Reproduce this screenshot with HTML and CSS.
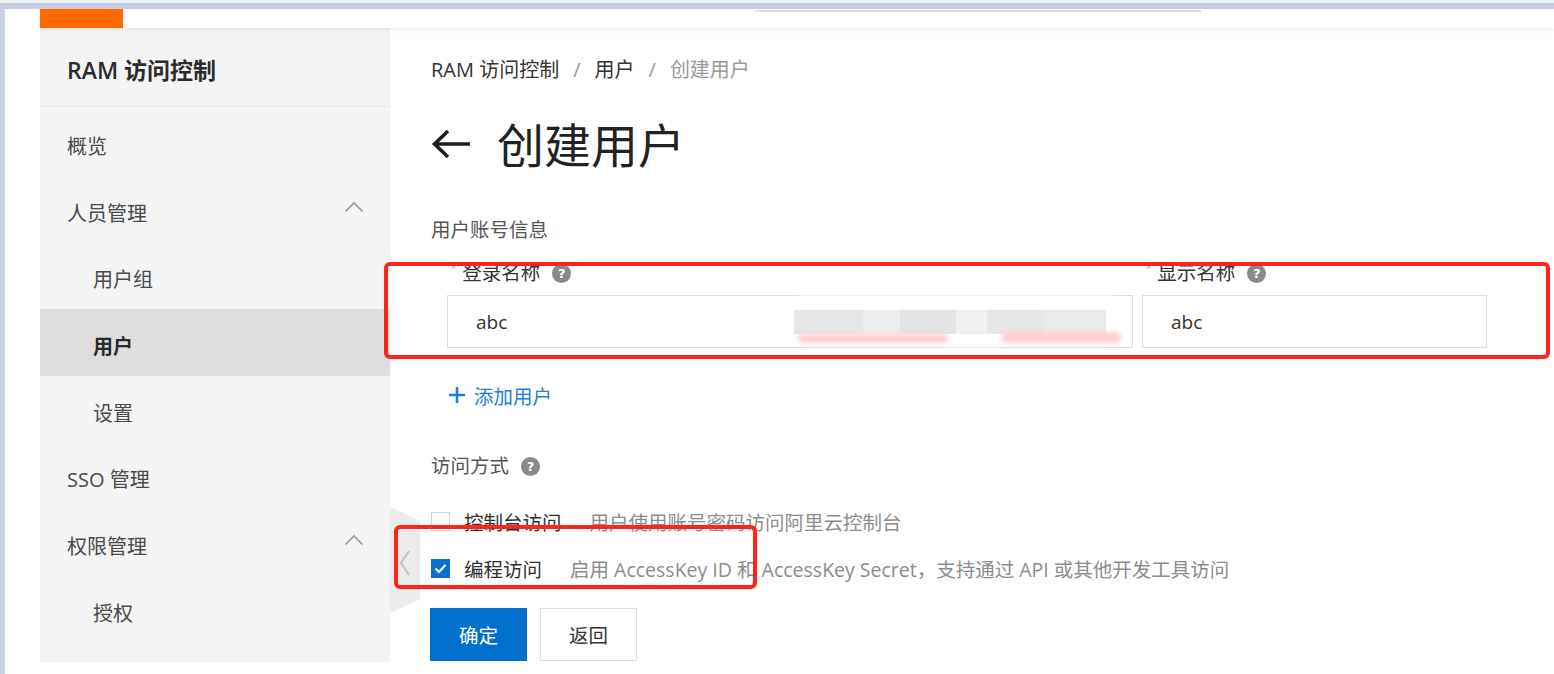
FILE: index.html
```html
<!DOCTYPE html>
<html lang="zh-CN">
<head>
<meta charset="utf-8">
<title>创建用户 - RAM 访问控制</title>
<link rel="stylesheet" href="styles.css">
</head>
<body>
<div class="page">
  <div class="chrome-top"></div>
  <div class="chrome-band"></div>
  <div class="frame">
    <div class="frame-left"></div>
    <div class="app">
      <header class="topnav">
        <div class="logo"></div>
        <div class="topnav-line"></div>
      </header>
      <div class="layout">
        <aside class="sidebar">
          <div class="side-title">RAM 访问控制</div>
          <nav class="menu">
            <div class="menu-item">概览</div>
            <div class="menu-item">人员管理
              <svg class="chev" width="20" height="12" viewBox="0 0 20 12"><polyline points="1.5,10.5 10,2 18.5,10.5" fill="none" stroke="#9a9a9a" stroke-width="1.7"/></svg>
            </div>
            <div class="menu-item sub">用户组</div>
            <div class="menu-item sub active">用户</div>
            <div class="menu-item sub">设置</div>
            <div class="menu-item">SSO 管理</div>
            <div class="menu-item">权限管理
              <svg class="chev" width="20" height="12" viewBox="0 0 20 12"><polyline points="1.5,10.5 10,2 18.5,10.5" fill="none" stroke="#9a9a9a" stroke-width="1.7"/></svg>
            </div>
            <div class="menu-item sub">授权</div>
          </nav>
        </aside>
        <main class="main">
          <div class="collapse-tab">
            <svg width="30" height="106" viewBox="0 0 30 106"><polygon points="0,0 30,14 30,92 0,106" fill="#ebebeb"/><polyline points="19,44 11,56 19,68" fill="none" stroke="#c2c2c2" stroke-width="2"/></svg>
          </div>
          <div class="breadcrumb">
            <span>RAM 访问控制</span><span class="sep">/</span><span>用户</span><span class="sep">/</span><span class="current">创建用户</span>
          </div>
          <h1 class="page-title">
            <svg class="back" width="40" height="32" viewBox="0 0 40 32"><path d="M39 16 H4 M17 3 L3.5 16 L17 29" fill="none" stroke="#1f1f1f" stroke-width="3.6" stroke-linejoin="miter"/></svg>
            <span>创建用户</span>
          </h1>
          <div class="section-label">用户账号信息</div>
          <div class="fields">
            <div class="field field-login">
              <div class="label"><span class="req">*</span>登录名称<span class="help">?</span></div>
              <div class="input">abc
                <div class="smudge">
                  <div class="smudge-white"></div>
                  <div class="smudge-blocks"></div>
                  <div class="smudge-pink p1"></div>
                  <div class="smudge-pink p2"></div>
                </div>
              </div>
            </div>
            <div class="field field-display">
              <div class="label"><span class="req">*</span>显示名称<span class="help">?</span></div>
              <div class="input">abc</div>
            </div>
          </div>
          <div class="add-user">
            <svg width="18" height="18" viewBox="0 0 18 18"><path d="M9 1 V17 M1 9 H17" stroke="#1b7fd6" stroke-width="2.6"/></svg>
            <span>添加用户</span>
          </div>
          <div class="section-label access">访问方式<span class="help">?</span></div>
          <div class="check-row first">
            <span class="checkbox"></span>
            <span class="check-label">控制台访问</span>
            <span class="check-desc">用户使用账号密码访问阿里云控制台</span>
          </div>
          <div class="check-row">
            <span class="checkbox checked">
              <svg width="19" height="19" viewBox="0 0 19 19"><polyline points="4.5,9.5 8,13 14.5,6" fill="none" stroke="#fff" stroke-width="2.2"/></svg>
            </span>
            <span class="check-label">编程访问</span>
            <span class="check-desc">启用 AccessKey ID 和 AccessKey Secret，支持通过 API 或其他开发工具访问</span>
          </div>
          <div class="actions">
            <button class="btn btn-primary">确定</button>
            <button class="btn btn-default">返回</button>
          </div>
        </main>
      </div>
    </div>
  </div>
  <div class="annot annot-fields"></div>
  <div class="annot annot-check"></div>
</div>
</body>
</html>
```

FILE: styles.css
```css
* { box-sizing: border-box; }

html, body {
  margin: 0;
  padding: 0;
  background: #ffffff;
}

body {
  font-family: "Open Sans", "Noto Sans CJK SC", sans-serif;
  color: #333333;
}

.page {
  position: relative;
  width: 1554px;
  height: 674px;
  overflow: hidden;
  background: #ffffff;
}

.chrome-top {
  height: 3px;
  background: #eef0f3;
}

.chrome-band {
  height: 6px;
  background: #c6cfe0;
}

.frame {
  display: flex;
  height: 665px;
}

.frame-left {
  width: 5px;
  background: #c9d2e3;
}

.app {
  flex: 1;
  display: flex;
  flex-direction: column;
  padding-left: 35px;
}

.topnav {
  position: relative;
  z-index: 2;
  height: 19px;
  display: flex;
  background: #ffffff;
  box-shadow: 0 2px 5px rgba(0, 0, 0, 0.06);
}

.logo {
  width: 83px;
  height: 19px;
  background: #ff6a00;
}

.topnav-line {
  margin-left: 632px;
  margin-top: 1px;
  width: 446px;
  height: 2px;
  background: #dedede;
}

.layout {
  display: flex;
  flex: 1;
}

/* Sidebar */
.sidebar {
  width: 350px;
  height: 634px;
  background: #f4f4f4;
}

.side-title {
  height: 79px;
  padding-left: 27px;
  display: flex;
  align-items: center;
  font-size: 23px;
  font-weight: 600;
  color: #2b2b2b;
  border-bottom: 1px solid #e6e6e6;
  padding-top: 3px;
}

.menu {
  padding-top: 2px;
}

.menu-item {
  height: 66.7px;
  display: flex;
  align-items: center;
  justify-content: space-between;
  padding: 6px 26px 0 27px;
  font-size: 20px;
  color: #4a4a4a;
}

.menu-item.sub {
  padding-left: 53px;
}

.menu-item.active {
  background: #dedede;
  font-weight: 700;
  color: #2a2a2a;
}

.chev {
  margin-top: -10px;
}

/* Main */
.main {
  position: relative;
  flex: 1;
  padding: 28px 0 0 41px;
}

.collapse-tab {
  position: absolute;
  left: 0;
  top: 479px;
  width: 30px;
  height: 106px;
  z-index: 1;
}

.collapse-tab svg {
  display: block;
}

.breadcrumb {
  height: 28px;
  line-height: 28px;
  font-size: 20px;
  color: #333333;
  display: flex;
}

.breadcrumb .sep {
  color: #9a9a9a;
  margin: 0 14px;
}

.breadcrumb .current {
  color: #9a9a9a;
}

.page-title {
  margin: 31px 0 0 0;
  height: 60px;
  display: flex;
  align-items: center;
  font-size: 47px;
  font-weight: 400;
  color: #222222;
  line-height: 60px;
}

.page-title .back {
  margin-right: 26px;
  margin-top: -2px;
}

.section-label {
  margin-top: 41px;
  height: 28px;
  line-height: 28px;
  font-size: 19.5px;
  color: #555555;
  display: flex;
  align-items: center;
}

.fields {
  display: flex;
  gap: 9px;
  margin-top: 15px;
  margin-left: 16px;
}

.field-login { width: 686px; }
.field-display { width: 345px; }

.label {
  height: 28px;
  line-height: 28px;
  font-size: 19.5px;
  color: #333333;
  display: flex;
  align-items: center;
}

.req {
  color: #b0b0b0;
  font-size: 13px;
  margin: -10px 5px 0 3px;
  line-height: 14px;
}

.help {
  display: inline-flex;
  align-items: center;
  justify-content: center;
  width: 19px;
  height: 19px;
  margin-left: 12px;
  border-radius: 50%;
  background: #8a8a8a;
  color: #ffffff;
  font-family: "DejaVu Sans", sans-serif;
  font-size: 13px;
  font-weight: 700;
  line-height: 19px;
}

.input {
  position: relative;
  margin-top: 8px;
  height: 53px;
  border: 1px solid #dcdcdc;
  padding-left: 28px;
  display: flex;
  align-items: center;
  font-size: 19px;
  color: #333333;
  background: #ffffff;
}

.smudge {
  position: absolute;
  left: 338px;
  top: -2px;
  width: 347px;
  height: 55px;
  overflow: hidden;
}

.smudge-white {
  position: absolute;
  left: 0;
  top: 0;
  width: 340px;
  height: 50px;
  background: #ffffff;
  border-radius: 30px;
  filter: blur(3px);
}

.smudge-blocks {
  position: absolute;
  left: 8px;
  top: 16px;
  width: 312px;
  height: 24px;
  background: linear-gradient(90deg,
    #e6e6e6 0, #e6e6e6 22%,
    #ececec 22%, #ececec 34%,
    #e4e4e4 34%, #e4e4e4 52%,
    #f0f0f0 52%, #f0f0f0 62%,
    #e6e6e6 62%, #e6e6e6 80%,
    #eaeaea 80%, #eaeaea 100%);
}

.smudge-pink {
  position: absolute;
  height: 9px;
  background: #ffcfcf;
  border-radius: 8px;
  filter: blur(2px);
}

.smudge-pink.p1 {
  left: 12px;
  top: 40px;
  width: 150px;
}

.smudge-pink.p2 {
  left: 215px;
  top: 38px;
  width: 120px;
  height: 11px;
}

.add-user {
  margin-top: 33px;
  margin-left: 17px;
  height: 28px;
  display: flex;
  align-items: center;
  font-size: 19.5px;
  color: #1b7fd6;
}

.add-user svg {
  margin-right: 8px;
}

.section-label.access {
  margin-top: 43px;
}

.check-row {
  margin-top: 19px;
  height: 28px;
  display: flex;
  align-items: center;
  font-size: 19.5px;
}

.check-row.first {
  margin-top: 27px;
}

.checkbox {
  width: 19px;
  height: 19px;
  border: 1px solid #d2d2d2;
  background: #ffffff;
  margin-right: 14px;
  display: inline-flex;
}

.checkbox.checked {
  background: #0a70cf;
  border-color: #0a70cf;
}

.checkbox.checked svg {
  margin: -1px;
}

.check-label {
  color: #2f2f2f;
  margin-right: 28px;
}

.check-desc {
  color: #8c8c8c;
}

.actions {
  margin-top: 26px;
  display: flex;
  gap: 13px;
  margin-left: -1px;
}

.btn {
  height: 53px;
  width: 97px;
  font-family: "Open Sans", "Noto Sans CJK SC", sans-serif;
  font-size: 19.5px;
  border: 1px solid #dddddd;
  cursor: pointer;
}

.btn-primary {
  background: #0070cc;
  border-color: #0070cc;
  color: #ffffff;
}

.btn-default {
  background: #ffffff;
  color: #333333;
}

/* Annotation boxes drawn over the screenshot */
.annot {
  position: absolute;
  border: 4px solid #ff2418;
  border-radius: 6px;
  pointer-events: none;
  z-index: 5;
}

.annot-fields {
  left: 384px;
  top: 262px;
  width: 1166px;
  height: 97px;
}

.annot-check {
  left: 394px;
  top: 525px;
  width: 363px;
  height: 64px;
}
```
